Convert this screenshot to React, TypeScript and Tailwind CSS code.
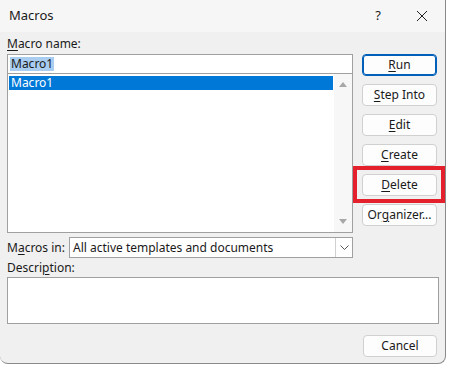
import type { ReactNode } from "react"

function Btn({ children, primary }: { children: ReactNode; primary?: boolean }) {
  return (
    <div
      className={
        "h-[22px] w-[75px] flex items-center justify-center rounded-[4px] bg-[#fdfdfd] text-[12px] text-[#1a1a1a] " +
        (primary ? "border border-[#005fb8] shadow-[inset_0_0_0_1px_#005fb8]" : "border border-[#d0d0d0]")
      }
    >
      {children}
    </div>
  )
}

function U({ children }: { children: ReactNode }) {
  return <span className="underline underline-offset-2">{children}</span>
}

export default function App() {
  return (
    <div
      className="w-[449px] h-[365px] bg-white overflow-hidden relative"
      style={{ fontFamily: '"Noto Sans", "Open Sans", sans-serif' }}
    >
      <div className="w-[446px] h-[364px] bg-[#f0f0f0] rounded-b-[8px] border-r border-b border-[#8a8a8a] flex flex-col">
        <div className="h-[32px] bg-[#f6f6f6] flex items-center pl-[9px] text-[13px] text-[#1a1a1a]">
          <span className="flex-1">Macros</span>
          <span className="w-[20px] text-center mr-[28px] text-[13px]">?</span>
          <svg width="12" height="12" viewBox="0 0 12 12" className="mr-[17px]">
            <path d="M1 1L11 11M11 1L1 11" stroke="#222" strokeWidth="1" />
          </svg>
        </div>

        <div className="flex pl-[7px]">
          <div className="w-[346px] flex flex-col">
            <div className="h-[16px] mt-[4px] text-[12px] leading-[16px] text-[#1a1a1a]">
              <U>M</U>acro name:
            </div>
            <div className="mt-[2px] h-[20px] bg-white border border-[#a0a0a0] flex items-center pl-[2px]">
              <span className="bg-[#a9cdf0] text-[12px] leading-[14px] text-[#1a1a1a] px-[1px]">Macro1</span>
            </div>
            <div className="h-[159px] bg-white border border-t-0 border-[#a0a0a0] flex">
              <div className="flex-1 pt-[2px] pl-[1px]">
                <div className="h-[14px] w-[324px] bg-[#0078d7] text-white text-[12px] leading-[14px] pl-[2px]">
                  Macro1
                </div>
              </div>
              <div className="w-[18px] bg-[#f7f7f7] flex flex-col items-center justify-between py-[8px]">
                <svg width="8" height="5" viewBox="0 0 8 5">
                  <path d="M0 5L4 0L8 5Z" fill="#a8a8a8" />
                </svg>
                <svg width="8" height="5" viewBox="0 0 8 5">
                  <path d="M0 0L8 0L4 5Z" fill="#a8a8a8" />
                </svg>
              </div>
            </div>
            <div className="mt-[4px] flex items-center">
              <span className="w-[62px] text-[12px] text-[#1a1a1a]">
                M<U>a</U>cros in:
              </span>
              <div className="h-[21px] flex-1 bg-white border border-[#a0a0a0] flex items-center">
                <span className="flex-1 pl-[3px] text-[12px] text-[#1a1a1a]">All active templates and documents</span>
                <div className="w-[17px] h-full border-l border-[#d0d0d0] flex items-center justify-center">
                  <svg width="9" height="5" viewBox="0 0 9 5">
                    <path d="M0.5 0.5L4.5 4.5L8.5 0.5" stroke="#555" strokeWidth="1" fill="none" />
                  </svg>
                </div>
              </div>
            </div>
          </div>

          <div className="ml-[9px] mt-[22px] flex flex-col gap-[8px] relative">
            <Btn primary>
              <U>R</U>un
            </Btn>
            <Btn>
              <U>S</U>tep Into
            </Btn>
            <Btn>
              <U>E</U>dit
            </Btn>
            <Btn>
              <U>C</U>reate
            </Btn>
            <Btn>
              <U>D</U>elete
            </Btn>
            <Btn>
              Or<U>g</U>anizer...
            </Btn>
            <div className="absolute left-[-9px] top-[112px] w-[92px] h-[37px] border-[4px] border-[#e4202c]" />
          </div>
        </div>

        <div className="pl-[7px] mt-[3px] h-[14px] text-[12px] leading-[14px] text-[#1a1a1a]">
          Descri<U>p</U>tion:
        </div>
        <div className="ml-[7px] mt-[2px] w-[432px] h-[47px] bg-white border border-[#a0a0a0]" />

        <div className="flex justify-end pr-[8px] mt-[11px]">
          <div className="h-[22px] w-[74px] flex items-center justify-center rounded-[4px] bg-[#fdfdfd] border border-[#d0d0d0] text-[12px] text-[#1a1a1a]">
            Cancel
          </div>
        </div>
      </div>
    </div>
  )
}
